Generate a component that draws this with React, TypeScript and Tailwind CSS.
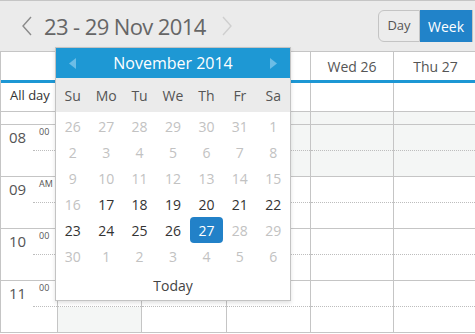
import React from 'react';

const days = [
  { label: '', w: 'w-[84px]' },
  { label: '', w: 'w-[85px]' },
  { label: '', w: 'w-[84px]' },
  { label: 'Wed 26', w: 'w-[83px]' },
  { label: 'Thu 27', w: 'w-[84px]' },
  { label: '', w: 'w-[84px]' },
  { label: '', w: 'w-[84px]' },
];

const hours = [
  { h: '08', sub: '00', gray: true },
  { h: '09', sub: 'AM', gray: false },
  { h: '10', sub: '00', gray: false },
  { h: '11', sub: '00', gray: false },
];

// [day, kind] kind: o = other/disabled, n = normal, s = selected
const weeks: [number, string][][] = [
  [[26, 'o'], [27, 'o'], [28, 'o'], [29, 'o'], [30, 'o'], [31, 'o'], [1, 'o']],
  [[2, 'o'], [3, 'o'], [4, 'o'], [5, 'o'], [6, 'o'], [7, 'o'], [8, 'o']],
  [[9, 'o'], [10, 'o'], [11, 'o'], [12, 'o'], [13, 'o'], [14, 'o'], [15, 'o']],
  [[16, 'o'], [17, 'n'], [18, 'n'], [19, 'n'], [20, 'n'], [21, 'n'], [22, 'n']],
  [[23, 'n'], [24, 'n'], [25, 'n'], [26, 'n'], [27, 's'], [28, 'o'], [29, 'o']],
  [[30, 'o'], [1, 'o'], [2, 'o'], [3, 'o'], [4, 'o'], [5, 'o'], [6, 'o']],
];

function Chevron({ dir, color }: { dir: 'l' | 'r'; color: string }) {
  return (
    <svg width="12" height="22" viewBox="0 0 12 22">
      <polyline
        points={dir === 'l' ? '10,2 2,11 10,20' : '2,2 10,11 2,20'}
        fill="none"
        stroke={color}
        strokeWidth="1.4"
      />
    </svg>
  );
}

function Calendar() {
  return (
    <div className="absolute left-[55px] top-[47px] w-[236px] h-[254px] bg-white border border-[#c3c3c3] shadow-[0_2px_4px_rgba(0,0,0,0.12)]">
      {/* Header */}
      <div className="h-[30px] bg-[#1e98d4] flex items-center justify-between px-[13px]">
        <svg width="7" height="11" viewBox="0 0 7 11">
          <polygon points="7,0 0,5.5 7,11" fill="#6cbde6" />
        </svg>
        <span className="text-white text-[16px] leading-none">November 2014</span>
        <svg width="7" height="11" viewBox="0 0 7 11">
          <polygon points="0,0 7,5.5 0,11" fill="#6cbde6" />
        </svg>
      </div>
      {/* Weekday names */}
      <div className="h-[34px] bg-[#ebebeb] grid grid-cols-7 items-center text-[14px] text-[#555] text-center">
        {['Su', 'Mo', 'Tu', 'We', 'Th', 'Fr', 'Sa'].map((d) => (
          <span key={d}>{d}</span>
        ))}
      </div>
      {/* Days */}
      <div className="pt-[1px]">
        {weeks.map((week, i) => (
          <div key={i} className="grid grid-cols-7 h-[26px] text-[14px] text-center">
            {week.map(([n, kind], j) => (
              <div
                key={j}
                className={
                  kind === 's'
                    ? 'flex items-center justify-center rounded-[4px] bg-[#2281c8] text-white'
                    : kind === 'n'
                    ? 'flex items-center justify-center text-[#333]'
                    : 'flex items-center justify-center text-[#c2c2c2]'
                }
              >
                {n}
              </div>
            ))}
          </div>
        ))}
      </div>
      <div className="h-[32px] flex items-center justify-center text-[14px] text-[#444]">Today</div>
    </div>
  );
}

export default function App() {
  return (
    <div className="relative w-[475px] h-[334px] overflow-hidden bg-white font-['Open_Sans',sans-serif]">
      {/* Toolbar */}
      <div className="h-[52px] bg-[#ebebeb] border-t border-b border-[#c5c5c5] flex items-center">
        <div className="ml-[21px] flex items-center">
          <Chevron dir="l" color="#8a8a8a" />
        </div>
        <span className="ml-[11px] text-[22px] text-[#666] tracking-[-0.6px] leading-none">23 - 29 Nov 2014</span>
        <div className="ml-[15px] flex items-center">
          <Chevron dir="r" color="#cfcfcf" />
        </div>
        <div className="ml-auto mr-[2px] flex h-[32px]">
          <div className="w-[42px] flex items-center justify-center border border-[#c4c4c4] rounded-l-[6px] bg-[#ececec] text-[13px] text-[#555]">
            Day
          </div>
          <div className="w-[53px] flex items-center justify-center bg-[#2183c9] border-r border-[#c4c4c4] text-[14px] text-white">
            Week
          </div>
        </div>
      </div>

      {/* Grid */}
      <div className="border-l border-[#c5c5c5]">
        {/* Day header */}
        <div className="flex h-[28px]">
          <div className="w-[56px] shrink-0" />
          {days.map((d, i) => (
            <div key={i} className={`${d.w} shrink-0 border-l border-[#c5c5c5] flex items-center justify-center text-[14px] text-[#555]`}>
              {d.label}
            </div>
          ))}
        </div>
        <div className="h-[3px] bg-[#1d97d4]" />

        {/* All day */}
        <div className="flex h-[29px] border-b border-[#c5c5c5]">
          <div className="w-[56px] shrink-0 pl-[9px] pt-[3px] text-[13px] text-[#333] whitespace-nowrap">All day</div>
          {days.map((d, i) => (
            <div key={i} className={`${d.w} shrink-0 border-l border-[#c5c5c5]`} />
          ))}
        </div>

        {/* Band */}
        <div className="flex h-[13px] border-b border-[#c5c5c5]">
          <div className="w-[56px] shrink-0" />
          {days.map((d, i) => (
            <div key={i} className={`${d.w} shrink-0 border-l border-[#c5c5c5] bg-[#f4f6f5]`} />
          ))}
        </div>

        {/* Hour rows */}
        {hours.map((hr, hi) => (
          <div key={hr.h} className="flex h-[52px] border-b border-[#c5c5c5]">
            <div className="w-[56px] shrink-0 flex">
              <div className="w-[32px] pl-[8px] pt-[3px] text-[15px] leading-[18px] text-[#555]">{hr.h}</div>
              <div className="w-[24px] flex flex-col">
                <div className="h-[26px] border-b border-dotted border-[#bdbdbd] pl-[6px] pt-[2px] text-[9px] leading-[10px] text-[#555]">
                  {hr.sub}
                </div>
              </div>
            </div>
            {days.map((d, di) => (
              <div
                key={di}
                className={`${d.w} shrink-0 border-l border-[#c5c5c5] flex flex-col ${hr.gray ? 'bg-[#f4f6f5]' : ''}`}
              >
                <div className="h-[26px] border-b border-dotted border-[#bdbdbd]" />
                <div className={`flex-1 ${hi === 3 && di === 0 ? 'bg-[#f4f6f5]' : ''}`} />
              </div>
            ))}
          </div>
        ))}
      </div>

      <Calendar />
    </div>
  );
}
